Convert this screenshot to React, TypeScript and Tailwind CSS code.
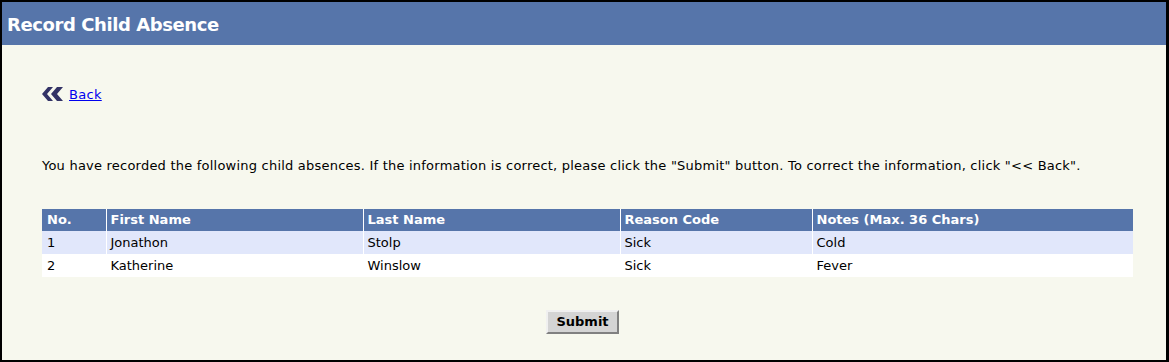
import React from "react";

const rows = [
  { no: "1", first: "Jonathon", last: "Stolp", reason: "Sick", notes: "Cold" },
  { no: "2", first: "Katherine", last: "Winslow", reason: "Sick", notes: "Fever" },
];

export default function App() {
  return (
    <div
      className="w-[1169px] h-[362px] bg-black pt-[2px] pl-[2px] pr-[3px] pb-[2px]"
      style={{ fontFamily: 'Verdana, "DejaVu Sans", sans-serif' }}
    >
      <div className="h-full bg-[#f7f8ee] flex flex-col">
        <div className="h-[43px] bg-[#5675aa] flex items-center pl-[5px] pt-[3px]">
          <h1 className="text-white font-bold text-[18px] leading-none tracking-[-0.42px]">Record Child Absence</h1>
        </div>
        <div className="pl-[40px] pr-[33px]">
          <div className="mt-[41px] flex items-center h-[16px]">
            <svg width="22" height="14" viewBox="0 0 22 14" className="mr-[5px]">
              <polygon points="6,0 11,0 5,7 11,14 6,14 0,7" fill="#333366" />
              <polygon points="15,0 21,0 15,7 21,14 15,14 9,7" fill="#333366" />
            </svg>
            <a href="#" className="text-[13px] text-[#0000ee] underline leading-none tracking-[0.3px]">Back</a>
          </div>
          <p className="mt-[56px] text-[13px] text-black leading-[16px] tracking-[0.22px]">
            You have recorded the following child absences. If the information is correct, please click the "Submit" button. To correct the information, click "&lt;&lt; Back".
          </p>
          <table className="mt-[35px] w-[1091px] border-collapse text-[13px]">
            <thead>
              <tr className="bg-[#5675aa] text-white font-bold h-[22px]">
                <th className="w-[64px] text-left font-bold pl-[5px] pr-[4px] border-r border-white">No.</th>
                <th className="w-[257px] text-left font-bold px-[4px] border-r border-white">First Name</th>
                <th className="w-[257px] text-left font-bold px-[4px] border-r border-white">Last Name</th>
                <th className="w-[192px] text-left font-bold px-[4px] border-r border-white">Reason Code</th>
                <th className="text-left font-bold px-[4px]">Notes (Max. 36 Chars)</th>
              </tr>
            </thead>
            <tbody>
              {rows.map((r, i) => (
                <tr key={r.no} className={`h-[23px] ${i === 0 ? "bg-[#e1e7fb]" : "bg-white"} text-black`}>
                  <td className="pl-[5px] pr-[4px] border-r border-white">{r.no}</td>
                  <td className="px-[4px] border-r border-white">{r.first}</td>
                  <td className="px-[4px] border-r border-white">{r.last}</td>
                  <td className="px-[4px] border-r border-white">{r.reason}</td>
                  <td className="px-[4px]">{r.notes}</td>
                </tr>
              ))}
            </tbody>
          </table>
          <div className="mt-[33px] flex justify-center">
            <button className="mr-[10px] h-[24px] px-[8px] bg-[#d4d4d4] text-[13px] font-bold text-black border-2 border-t-[#f0f0f0] border-l-[#f0f0f0] border-b-[#808080] border-r-[#808080]">
              Submit
            </button>
          </div>
        </div>
      </div>
    </div>
  );
}
